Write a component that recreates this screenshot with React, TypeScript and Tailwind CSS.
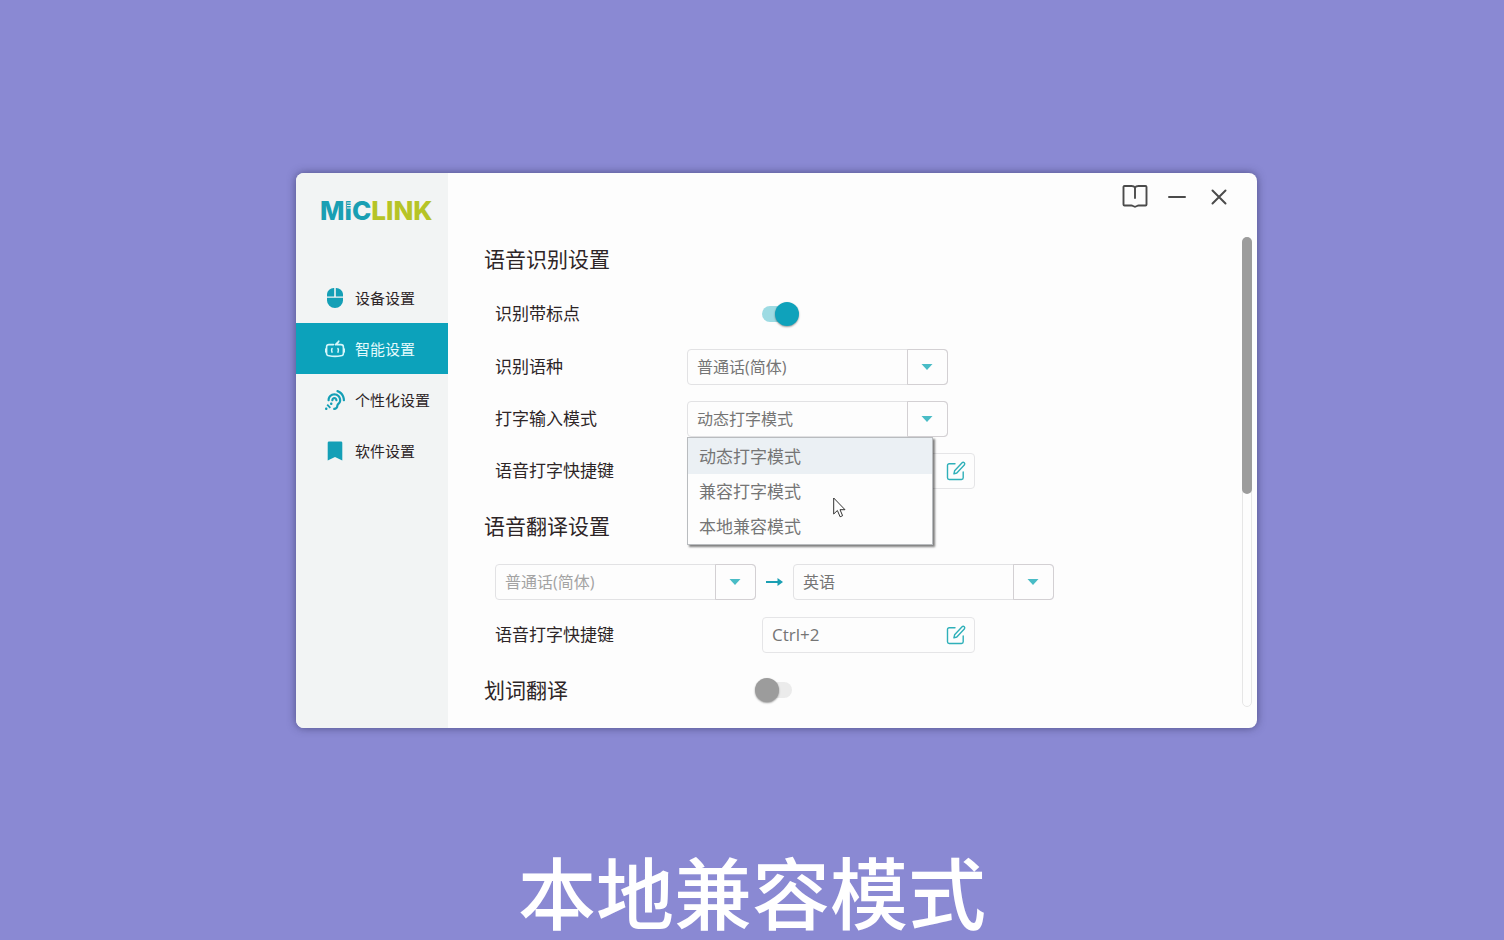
import React, { useState } from 'react';
import { FaAssistiveListeningSystems } from 'react-icons/fa';

const LANGUAGES = ['普通话(简体)', '英语'];
const MODES = ['动态打字模式', '兼容打字模式', '本地兼容模式'];

const MouseIcon = () => (
  <svg viewBox="0 0 16 20" className="w-4 h-5" fill="currentColor" aria-hidden="true">
    <path d="M7.200 0v8.400H0V6a7 6.200 0 0 1 7.200-6zM8.800 0A7 6.200 0 0 1 16 6v2.400H8.800zM0 9.800h16v2.600a8 7.600 0 0 1-16 0z" />
  </svg>
);

const RobotIcon = () => (
  <svg viewBox="0 0 20 18" className="w-5 h-[18px]" fill="none" stroke="currentColor" strokeWidth="1.600" strokeLinecap="round" strokeLinejoin="round" aria-hidden="true">
    <path d="M8.500 4.600H4A2.400 2.400 0 0 0 1.600 7v7A2.400 2.400 0 0 0 4 15.800c4 .8 8 .8 12 0a2.400 2.400 0 0 0 2.400-2.300V7A2.400 2.400 0 0 0 16 4.600h-4.500L13.800 1.200L10.500 4.600" />
    <path d="M7 8.500q-.9 1.800 0 3.600M13 8.500q.9 1.800 0 3.600M.8 9v3M19.200 9v3" />
  </svg>
);

const BookmarkIcon = () => (
  <svg viewBox="0 0 16 20" className="w-4 h-5" fill="currentColor" aria-hidden="true">
    <path d="M2 .5h12a1.300 1.300 0 0 1 1.300 1.300V19.500L8 16 .7 19.500V1.800A1.300 1.300 0 0 1 2 .5z" />
  </svg>
);

const EditIcon = () => (
  <svg viewBox="0 0 20 20" className="w-5 h-5" fill="none" stroke="currentColor" strokeWidth="1.400" strokeLinecap="round" strokeLinejoin="round" aria-hidden="true">
    <path d="M9 2.800H3.200a1.700 1.700 0 0 0-1.700 1.700v12.300a1.700 1.700 0 0 0 1.700 1.700h12.300a1.700 1.700 0 0 0 1.700-1.700V11" />
    <path d="M16.100 1.800a1.500 1.500 0 0 1 2.200 2.100L10.800 12l-2.900.8.700-3z" />
  </svg>
);

const BookIcon = () => (
  <svg viewBox="0 0 26 24" className="w-[26px] h-6" fill="none" stroke="currentColor" strokeWidth="1.900" strokeLinecap="round" strokeLinejoin="round" aria-hidden="true">
    <path d="M13 3.600C12.300 2.500 11 2 9.500 2H2.500a1 1 0 0 0-1 1v17.500a1 1 0 0 0 1 1H9.500c1.300 0 1.800 1.200 3.500 1.200s2.200-1.200 3.500-1.200h7a1 1 0 0 0 1-1V3a1 1 0 0 0-1-1h-7C15 2 13.700 2.500 13 3.600z" />
    <path d="M13 4v10" />
  </svg>
);

const NAV = [
  { label: '设备设置', icon: <MouseIcon /> },
  { label: '智能设置', icon: <RobotIcon /> },
  { label: '个性化设置', icon: <FaAssistiveListeningSystems className="w-5 h-5" /> },
  { label: '软件设置', icon: <BookmarkIcon /> },
];

interface SelectBoxProps {
  id: string;
  label?: string;
  options: string[];
  value: string;
  onChange: (value: string) => void;
  muted?: boolean;
}

const SelectBox: React.FC<SelectBoxProps> = ({ id, label, options, value, onChange, muted }) => (
  <div className="flex w-[261px] h-9 rounded border border-[#e2e2e4] bg-[#fdfdfd]">
    <select
      id={id}
      aria-label={label}
      value={value}
      onChange={e => onChange(e.target.value)}
      className={`flex-1 min-w-0 appearance-none bg-transparent pl-[9px] text-base leading-6 outline-none ${muted ? 'text-[#a3a3a3]' : 'text-[#757575]'}`}
    >
      {options.map(o => (
        <option key={o}>{o}</option>
      ))}
    </select>
    <span className="-m-px flex w-[41px] shrink-0 items-center justify-center rounded-r border border-[#d3d0d3] pr-px pointer-events-none">
      <svg viewBox="0 0 12 6" className="w-3 h-[6px] text-[#49bcc6]" fill="currentColor" aria-hidden="true">
        <path d="M.5 0h11L6 6z" />
      </svg>
    </span>
  </div>
);

interface SwitchProps {
  id: string;
  checked: boolean;
  onChange: (checked: boolean) => void;
}

const Switch: React.FC<SwitchProps> = ({ id, checked, onChange }) => (
  <input
    id={id}
    type="checkbox"
    role="switch"
    checked={checked}
    onChange={e => onChange(e.target.checked)}
    className="relative h-6 w-[37px] appearance-none before:absolute before:right-0 before:top-1 before:h-4 before:w-[30px] before:rounded-full before:bg-[#ebebeb] after:absolute after:left-0 after:top-0 after:size-6 after:rounded-full after:bg-[#9c9c9c] after:shadow-[0_1px_2px_rgba(0,0,0,0.4)] checked:before:left-0 checked:before:bg-[#9ddbe3] checked:after:left-auto checked:after:right-0 checked:after:bg-[#0fa2bb]"
  />
);

const ShortcutBox: React.FC<{ id: string; value: string }> = ({ id, value }) => (
  <div className="flex w-[213px] h-9 items-center rounded border border-[#e5e5e7] bg-[#fdfdfd] pr-2">
    <input id={id} readOnly defaultValue={value} className="flex-1 min-w-0 bg-transparent pl-[9px] text-[17px] leading-6 text-[#757575] outline-none" />
    <button type="button" aria-label="编辑快捷键" className="text-[#2fb0b9]">
      <EditIcon />
    </button>
  </div>
);

const Title: React.FC<{ children: React.ReactNode }> = ({ children }) => (
  <h2 className="text-[21px] leading-8 text-[#2d2527]">{children}</h2>
);

const labelClass = 'text-[17px] leading-6 text-[#2d2527]';

const App: React.FC = () => {
  const [active, setActive] = useState(1);
  const [punctuation, setPunctuation] = useState(true);
  const [wordTranslate, setWordTranslate] = useState(false);
  const [language, setLanguage] = useState(LANGUAGES[0]);
  const [mode, setMode] = useState(MODES[0]);
  const [from, setFrom] = useState(LANGUAGES[0]);
  const [to, setTo] = useState(LANGUAGES[1]);

  return (
    <div className="flex min-h-screen flex-col bg-[#8a89d3] pt-[173px] font-['Open_Sans','Noto_Sans_CJK_SC',sans-serif]">
      <div className="ml-[296px] mr-[247px] flex overflow-hidden rounded-lg bg-[#fdfdfd] shadow-[0_0_8px_rgba(40,40,80,0.6)]">
        <aside className="w-[152px] shrink-0 bg-[#f2f4f4]">
          <div className="flex h-[99px] items-start pl-6 pt-[22px] font-['Inter',sans-serif] text-[26px] font-extrabold leading-8">
            <span className="relative text-[#199fb3]">
              MIC
              {/* 话筒纹理 */}
              <svg viewBox="0 0 8 8" className="absolute left-[24px] top-[7px] size-2" stroke="#f2f4f4" strokeWidth="1" aria-hidden="true">
                <path d="M3 1h5M3 3.500h5M3 6h5" />
              </svg>
            </span>
            <span className="text-[#b6c427]">LINK</span>
          </div>
          <nav>
            {NAV.map((item, i) => (
              <button
                key={item.label}
                type="button"
                onClick={() => setActive(i)}
                className={`flex h-[51px] w-full items-center gap-[10px] pl-[29px] text-[15px] leading-6 ${active === i ? 'bg-[#0ca2bb] text-[#e4fafc]' : 'text-[#2d2527]'}`}
              >
                <span className={`flex w-5 justify-center ${active === i ? 'text-[#d5f6fa]' : 'text-[#149fb6]'}`}>{item.icon}</span>
                {item.label}
              </button>
            ))}
          </nav>
        </aside>

        <div className="flex min-w-0 flex-1 flex-col">
          <header className="flex h-[57px] items-start justify-end gap-5 pr-[29px] pt-[11px] text-[#4b4b4b]">
            <button type="button" aria-label="使用说明">
              <BookIcon />
            </button>
            <button type="button" aria-label="最小化">
              <svg viewBox="0 0 18 24" className="w-[18px] h-6" stroke="currentColor" strokeWidth="2" strokeLinecap="round" aria-hidden="true">
                <path d="M1 13h16" />
              </svg>
            </button>
            <button type="button" aria-label="关闭" className="ml-1">
              <svg viewBox="0 0 18 24" className="w-[18px] h-6" stroke="currentColor" strokeWidth="2" strokeLinecap="round" aria-hidden="true">
                <path d="M2.500 6.500l13 13M15.500 6.500l-13 13" />
              </svg>
            </button>
          </header>

          <div className="flex flex-1">
            <main className="min-w-0 flex-1 pl-9 pb-[10px]">
              <section>
                <div className="flex h-[57px] items-center">
                  <Title>语音识别设置</Title>
                </div>
                <div className="flex h-[53px] items-center pl-[11px]">
                  <label htmlFor="punctuation" className={`w-[267px] ${labelClass}`}>识别带标点</label>
                  <Switch id="punctuation" checked={punctuation} onChange={setPunctuation} />
                </div>
                <div className="flex h-[53px] items-center pl-[11px]">
                  <label htmlFor="language" className={`w-48 ${labelClass}`}>识别语种</label>
                  <SelectBox id="language" options={LANGUAGES} value={language} onChange={setLanguage} />
                </div>
                <div className="flex h-[52px] items-center pl-[11px]">
                  <label htmlFor="mode" className={`w-48 ${labelClass}`}>打字输入模式</label>
                  <div className="relative">
                    <SelectBox id="mode" options={MODES} value={mode} onChange={setMode} />
                    {/* 展开的模式列表 */}
                    <ul role="listbox" aria-label="打字输入模式" className="absolute left-0 top-full z-10 w-[246px] border border-[#b9bcbf] bg-[#fdfdfd] text-[17px] leading-[34px] text-[#757575] shadow-[2px_2px_2px_rgba(0,0,0,0.5)]">
                      {MODES.map(m => (
                        <li
                          key={m}
                          role="option"
                          aria-selected={m === mode}
                          onClick={() => setMode(m)}
                          className={`pl-[11px] pt-px first:pt-0.5 ${m === mode ? 'bg-[#ebf0f4]' : ''}`}
                        >
                          {m}
                        </li>
                      ))}
                    </ul>
                    <svg viewBox="0 0 13 21" className="absolute left-[146px] top-[96px] z-20 w-[13px] h-[21px]" fill="#fff" stroke="#333" strokeWidth="1" strokeLinejoin="round" aria-hidden="true">
                      <path d="M.7 1v16l3.700-3.500 2.700 6.300 2.500-1.100-2.600-6h5z" />
                    </svg>
                  </div>
                </div>
                <div className="flex h-[52px] items-center pl-[11px]">
                  <label htmlFor="type-key" className={`w-[267px] ${labelClass}`}>语音打字快捷键</label>
                  <ShortcutBox id="type-key" value="" />
                </div>
              </section>

              <section>
                <div className="mb-0.5 flex h-[57px] items-center">
                  <Title>语音翻译设置</Title>
                </div>
                <div className="flex h-[52px] items-center pl-[11px]">
                  <SelectBox id="from" label="源语言" options={LANGUAGES} value={from} onChange={setFrom} muted />
                  <svg viewBox="0 0 17 12" className="mx-[10px] h-3 w-[17px] shrink-0 text-[#1a9fb3]" aria-hidden="true">
                    <path d="M0 6h13" stroke="currentColor" strokeWidth="2" />
                    <path d="M11.500 2L17 6l-5.500 4z" fill="currentColor" />
                  </svg>
                  <SelectBox id="to" label="目标语言" options={LANGUAGES} value={to} onChange={setTo} />
                </div>
                <div className="flex h-[53px] items-center pl-[11px]">
                  <label htmlFor="translate-key" className={`w-[267px] ${labelClass}`}>语音打字快捷键</label>
                  <ShortcutBox id="translate-key" value="Ctrl+2" />
                </div>
              </section>

              <section className="flex h-[57px] items-center">
                <label htmlFor="word-translate" className="w-[271px]">
                  <Title>划词翻译</Title>
                </label>
                <Switch id="word-translate" checked={wordTranslate} onChange={setWordTranslate} />
              </section>
            </main>

            <div className="mt-[7px] mr-[5px] mb-[21px] w-[10px] rounded-full border border-[#e6e6e6]">
              <div className="-mx-px -mt-px h-[55%] rounded-full bg-[#9c9c9c]" />
            </div>
          </div>
        </div>
      </div>

      <p className="mt-auto text-center text-[78px] font-medium leading-[92px] text-white">本地兼容模式</p>
    </div>
  );
};

export default App;
